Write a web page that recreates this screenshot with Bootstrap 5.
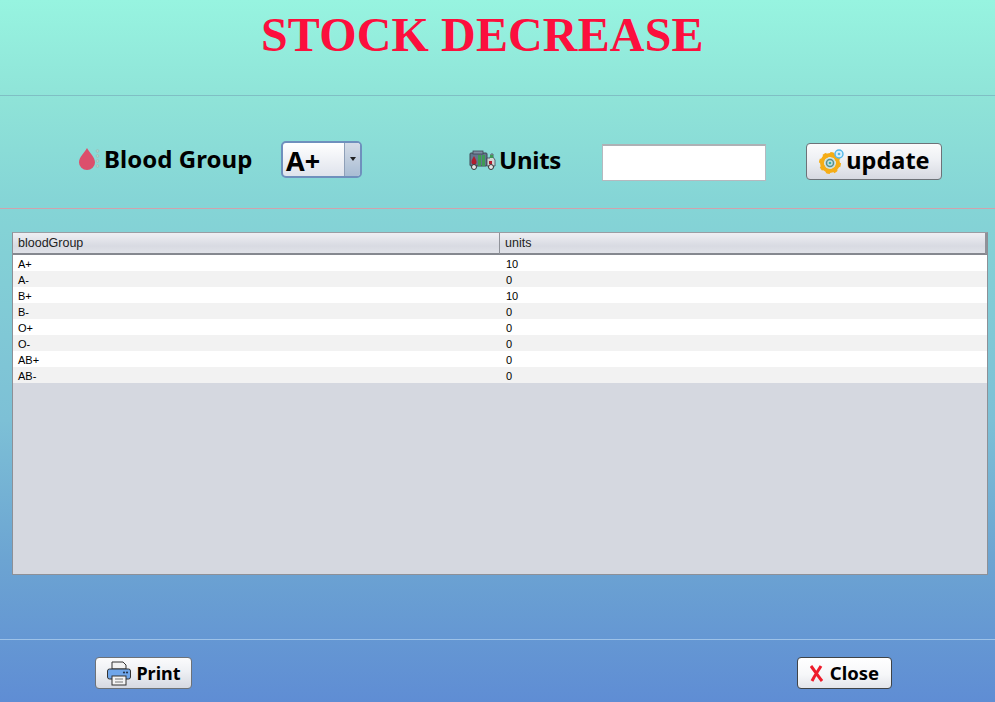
<!DOCTYPE html>
<html lang="en">
<head>
<meta charset="utf-8">
<title>Stock Decrease</title>
<link href="https://cdn.jsdelivr.net/npm/bootstrap@5.3.0/dist/css/bootstrap.min.css" rel="stylesheet">
<style>
html,body{height:702px;overflow:hidden}
body{width:995px;background:linear-gradient(180deg,#97f4e0 0,#8fe3d8 100px,#85d5d6 200px,#7dc0d6 420px,#6ca4d2 560px,#5f8dd4 702px);font-family:"Noto Sans","DejaVu Sans",sans-serif;color:#000}
.title-band{height:96px;border-bottom:1px solid #7fbfc4}
.title-text{margin:0;padding:7px 0 0 261px;font:700 48px/56px "Liberation Serif",serif;letter-spacing:.15px;color:#fc0f3d}
.tool-band{height:113px;border-bottom:1px solid #d0a3ac;padding:18px 0 0 78px}
.field-label{font-size:24px;font-weight:700;line-height:30px;white-space:nowrap}
.lbl-blood{width:203px;gap:4px;margin-top:-4px;letter-spacing:.05px}
.lbl-units{width:133px;gap:3px;margin-left:107px;margin-top:-2px;letter-spacing:-.25px}
.combo{width:81px;height:37px;margin-top:-4px;border:2px solid #6f90bd;border-radius:5px;background:linear-gradient(180deg,#fff,#dfe3ec);font-size:27px;font-weight:700;line-height:35px;padding-left:3px;position:relative;overflow:hidden}
.combo-arrow{position:absolute;right:0;top:0;bottom:0;width:16px;background:linear-gradient(180deg,#d5dce7,#a9bdd4);border-left:1px solid #8fa0b8}
.combo-arrow::after{content:"";position:absolute;left:5px;top:14px;border:3px solid transparent;border-top:4px solid #222;border-bottom:0}
.unit-input{width:164px;height:37px;background:#fff;border:1px solid #b5b9bf;border-top:2px solid #aeb1b5;margin-top:2px}
.swing-btn{display:flex;align-items:center;justify-content:center;border:1px solid #6d7278;border-radius:4px;background:linear-gradient(180deg,#fbfbfc,#eef0f4 45%,#d6d9e1);font-weight:700;color:#000;padding:0;white-space:nowrap}
.btn-update{width:136px;height:37px;margin-left:40px;font-size:23.5px;gap:2px;line-height:1;padding-left:1px}
.table-band{padding:23px 7px 0 12px;height:431px;border-bottom:1px solid #9dc2e8}
.grid-box{height:343px;background:#d5d8e0;border:1px solid #8d9097;border-top-color:#9a9da3;font:11px/16px "Liberation Sans",sans-serif}
.grid-head{height:22px;border-bottom:2px solid #85888f;background:linear-gradient(180deg,#eeeff3,#d8dae2 65%,#e0e2e8);font-size:12.5px;line-height:21px;display:grid;grid-template-columns:486px 1fr}
.grid-head span{padding-left:5px;color:#222}
.grid-head span+span{border-left:1px solid #8f9299;border-right:2px solid #8f9299;padding-left:5px}
.grid-row{display:grid;grid-template-columns:486px 1fr;height:16px;background:#fff;color:#000;line-height:18px}
.grid-row:nth-child(even){background:#f2f2f2}
.grid-row span{padding-left:5px}
.grid-row span+span{padding-left:7px}
.foot-band{padding:17px 103px 0 95px}
.btn-foot{width:97px;height:32px;font-size:18px;gap:4px;line-height:1}
.btn-close-foot{width:95px;gap:7px;font-size:18.5px;background:linear-gradient(180deg,#fff,#f6f7f9 55%,#e3e5ea);border-color:#3f4347}
</style>
</head>
<body>
<header class="title-band"><h1 class="title-text">STOCK DECREASE</h1></header>

<section class="tool-band d-flex align-items-center">
  <div class="field-label lbl-blood d-flex align-items-center">
    <svg width="22" height="24" viewBox="0 0 22 24" aria-hidden="true"><path d="M9 1C6.500 6 1 10 1 15.500a8 7.500 0 0 0 16 0C17 10 11.500 6 9 1Z" fill="#dc4f6c"/><g fill="#b4d2cb" stroke="#8fb0aa" stroke-width=".5"><circle cx="19.500" cy="4" r="1.400"/><circle cx="19.500" cy="9" r="1.400"/><circle cx="19.500" cy="14" r="1.400"/><circle cx="19.500" cy="19" r="1.400"/></g></svg>
    <span>Blood Group</span>
  </div>
  <div class="combo">A+<span class="combo-arrow"></span></div>
  <div class="field-label lbl-units d-flex align-items-center">
    <svg width="27" height="21" viewBox="0 0 27 21" aria-hidden="true"><rect x="1" y="3" width="17" height="13" rx="1" fill="#62768f" stroke="#3e4753"/><rect x="4" y="1" width="10" height="3" fill="#7e8ea3" stroke="#3e4753" stroke-width=".8"/><path d="M5 6c-1.500 3-2.500 4-2.500 6a2.500 2.500 0 0 0 5 0C7.500 10 6.500 9 5 6Z" fill="#b01e2e"/><rect x="9" y="5" width="3" height="11" fill="#3f9a55"/><rect x="13" y="5" width="3" height="11" fill="#3f9a55"/><path d="M18 8h3l1-4h2v3l2 3v6h-8Z" fill="#cfd6d4" stroke="#3e4753" stroke-width=".8"/><rect x="21" y="5" width="3" height="3" fill="#3f9a55"/><path d="M20 11h3v3h-3Z" fill="#b01e2e"/><circle cx="5" cy="17" r="2.500" fill="#e6e6e6" stroke="#333"/><circle cx="22" cy="17" r="2.500" fill="#e6e6e6" stroke="#333"/></svg>
    <span>Units</span>
  </div>
  <div class="unit-input" role="textbox" aria-label="Units"></div>
  <button type="button" class="btn swing-btn btn-update">
    <svg width="25" height="25" viewBox="0 0 25 25" aria-hidden="true"><circle cx="11" cy="14" r="8" fill="none" stroke="#f5ad16" stroke-width="4"/><circle cx="11" cy="14" r="8.500" fill="none" stroke="#f5ad16" stroke-width="5" stroke-dasharray="3.400 3.270"/><circle cx="11" cy="14" r="5.500" fill="#c8e2e0"/><circle cx="11" cy="14" r="3.500" fill="none" stroke="#5b8d8d" stroke-width="1.500"/><circle cx="11" cy="14" r="1.300" fill="#35b5a8"/><circle cx="20" cy="5" r="4" fill="#d7effa" stroke="#52b7ea" stroke-width="1.400"/><circle cx="20" cy="5" r="1.300" fill="#52b7ea"/></svg>
    <span>update</span>
  </button>
</section>

<section class="table-band">
  <div class="grid-box">
    <div class="grid-head"><span>bloodGroup</span><span>units</span></div>
    <div>
      <div class="grid-row"><span>A+</span><span>10</span></div>
      <div class="grid-row"><span>A-</span><span>0</span></div>
      <div class="grid-row"><span>B+</span><span>10</span></div>
      <div class="grid-row"><span>B-</span><span>0</span></div>
      <div class="grid-row"><span>O+</span><span>0</span></div>
      <div class="grid-row"><span>O-</span><span>0</span></div>
      <div class="grid-row"><span>AB+</span><span>0</span></div>
      <div class="grid-row"><span>AB-</span><span>0</span></div>
    </div>
  </div>
</section>

<footer class="foot-band d-flex justify-content-between">
  <button type="button" class="btn swing-btn btn-foot">
    <svg width="26" height="26" viewBox="0 0 26 26" aria-hidden="true"><path d="M6 9V2h11l3 3v4Z" fill="#f2f2f2" stroke="#333"/><rect x="1.500" y="9" width="23" height="10" rx="2" fill="#6fa6ea" stroke="#333"/><circle cx="18" cy="12.500" r="1.100" fill="#24364f"/><circle cx="21" cy="12.500" r="1.100" fill="#24364f"/><rect x="6" y="16" width="14" height="9" fill="#f4f4f4" stroke="#333"/><path d="M9 19h8M9 22h8" stroke="#777"/></svg>
    <span>Print</span>
  </button>
  <button type="button" class="btn swing-btn btn-foot btn-close-foot">
    <svg width="13" height="17" viewBox="0 0 13 17" aria-hidden="true"><path d="M1 1c3 4 7 10 11 15M11 1C8 6 5 10 2 16" fill="none" stroke="#ee1c2b" stroke-width="3"/></svg>
    <span>Close</span>
  </button>
</footer>
<script src="https://cdn.jsdelivr.net/npm/bootstrap@5.3.0/dist/js/bootstrap.bundle.min.js"></script>
</body>
</html>
